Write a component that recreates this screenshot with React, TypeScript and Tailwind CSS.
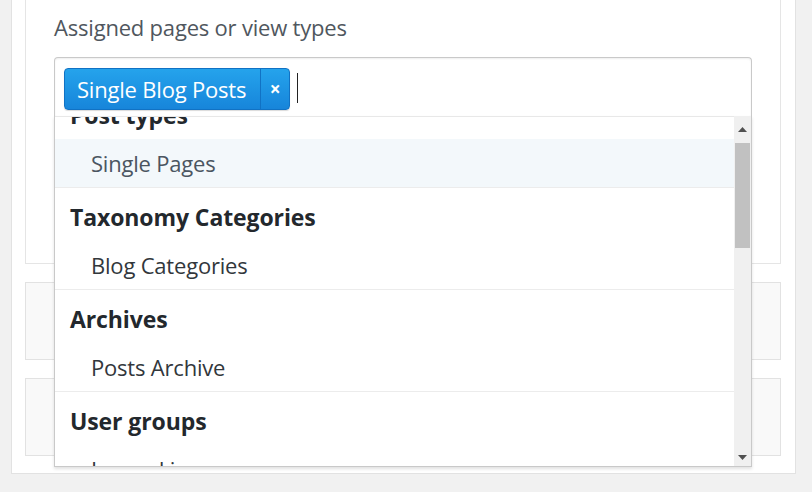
const groups = [
  { title: "Post types", items: ["Single Pages"] },
  { title: "Taxonomy Categories", items: ["Blog Categories"] },
  { title: "Archives", items: ["Posts Archive"] },
  { title: "User groups", items: ["Logged in users"] },
];

function Scrollbar() {
  return (
    <div className="w-[17px] bg-[#f0f0f0] flex flex-col">
      <div className="h-[27px] flex items-center justify-center">
        <svg width="9" height="5" viewBox="0 0 9 5">
          <path d="M0 5 L4.5 0 L9 5 Z" fill="#505050" />
        </svg>
      </div>
      <div className="mx-[1px] h-[105px] bg-[#c1c1c1]" />
      <div className="flex-1" />
      <div className="h-[17px] flex items-center justify-center">
        <svg width="9" height="5" viewBox="0 0 9 5">
          <path d="M0 0 L9 0 L4.5 5 Z" fill="#505050" />
        </svg>
      </div>
    </div>
  );
}

export default function App() {
  return (
    <div
      className="h-[492px] w-[812px] overflow-hidden bg-[#f1f1f1]"
      style={{ fontFamily: '"Open Sans", "Noto Sans", sans-serif' }}
    >
      <div className="ml-[11px] w-[785px] h-[474px] bg-white border-x border-b border-[#e2e2e2] pl-[13px] pr-[14px] flex flex-col">
        {/* main card */}
        <div className="h-[264px] border-x border-b border-[#e5e5e5] bg-white px-[28px] pt-[13px]">
          <div className="text-[22px] leading-[28px] text-[#50575e] tracking-[-0.2px]">
            Assigned pages or view types
          </div>
          <div className="relative mt-[16px]">
            <div className="h-[59px] rounded-t-[4px] border-x border-t border-[#c9c9c9] shadow-[inset_0_1px_2px_rgba(0,0,0,0.07)] px-[9px] pt-[10px] flex items-start gap-[7px]">
              <div className="flex h-[42px] rounded-[4px] border border-[#1172c4] bg-gradient-to-b from-[#25a3ec] to-[#1785da] text-white shadow-[0_1px_1px_rgba(0,0,0,0.15)]">
                <span className="pl-[12px] pr-[14px] text-[22px] leading-[40px] tracking-[-0.2px]">
                  Single Blog Posts
                </span>
                <span className="w-[29px] border-l border-[#1172c4] flex items-center justify-center text-[19px] font-bold leading-none">
                  ×
                </span>
              </div>
              <span className="mt-[5px] w-[1px] h-[30px] bg-[#222]" />
            </div>
            {/* open dropdown */}
            <div className="absolute left-0 right-0 top-full h-[351px] border-x border-b border-[#c9c9c9] bg-white shadow-[0_2px_3px_rgba(0,0,0,0.12)] flex z-10">
              <div className="flex-1 overflow-hidden border-t border-[#e8e8e8]">
                <div className="-mt-[35px]">
                  {groups.map((g, gi) => (
                    <div key={g.title} className="border-b border-[#ececec]">
                      <div
                        className={`pl-[15px] text-[23px] leading-[28px] font-bold text-[#23282d] tracking-[-0.1px] ${
                          gi === 0 ? "pt-[19px] pb-[10px]" : "pt-[15px] pb-[10px]"
                        }`}
                      >
                        {g.title}
                      </div>
                      {g.items.map((it, ii) => (
                        <div
                          key={it}
                          className={`pl-[36px] py-[10px] text-[22px] leading-[28px] tracking-[-0.2px] ${
                            gi === 0 && ii === 0 ? "bg-[#f3f8fb] text-[#4b5561]" : "text-[#32373c]"
                          }`}
                        >
                          {it}
                        </div>
                      ))}
                    </div>
                  ))}
                </div>
              </div>
              <Scrollbar />
            </div>
          </div>
        </div>
        {/* collapsed boxes below */}
        <div className="mt-[18px] h-[78px] border border-[#e2e2e2] bg-[#f9f9f9]" />
        <div className="mt-[18px] h-[78px] border border-[#e2e2e2] bg-[#f9f9f9]" />
      </div>
    </div>
  );
}
